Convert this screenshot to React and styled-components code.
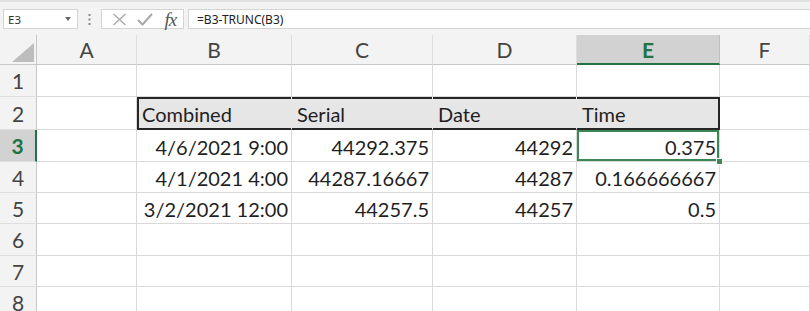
import React from "react";
import styled, { createGlobalStyle } from "styled-components";

const GlobalStyle = createGlobalStyle`
  html, body {
    margin: 0;
    padding: 0;
    background: #ffffff;
    overflow: hidden;
  }
  body {
    font-family: Lato, "Liberation Sans", sans-serif;
  }
`;

const GREEN = "#217346";
const GRID = "#d9d9d9";

const Page = styled.div`
  width: 810px;
  height: 311px;
  overflow: hidden;
  background: #f3f3f3;
`;

const FormulaBar = styled.div`
  display: flex;
  align-items: center;
  height: 35px;
  box-sizing: border-box;
  padding: 1px 0 0 3px;
  border-top: 2px solid #e1e1e1;
`;

const NameBox = styled.div`
  display: flex;
  align-items: center;
  justify-content: space-between;
  width: 75px;
  height: 20px;
  box-sizing: border-box;
  padding: 0 6px 0 4px;
  background: #fff;
  border: 1px solid #d4d4d4;
  font-family: "Noto Sans", "Liberation Sans", sans-serif;
  font-size: 11.5px;
  color: #333;
`;

const Caret = styled.span`
  width: 0;
  height: 0;
  border-left: 3px solid transparent;
  border-right: 3px solid transparent;
  border-top: 4px solid #666;
`;

const Grip = styled.div`
  display: flex;
  justify-content: center;
  width: 23px;
`;

const IconBox = styled.div`
  display: flex;
  align-items: center;
  width: 83px;
  height: 20px;
  box-sizing: border-box;
  margin-right: 4px;
  padding-left: 5px;
  background: #fff;
  border: 1px solid #d4d4d4;
`;

const IconSlot = styled.span`
  display: flex;
  align-items: center;
  justify-content: center;
  width: 27px;
`;

const Fx = styled.span`
  font-family: "Liberation Serif", serif;
  font-style: italic;
  font-size: 19px;
  color: #555;
  letter-spacing: -1px;
  line-height: 1;
`;

const FormulaInput = styled.div`
  flex: 1;
  display: flex;
  align-items: center;
  height: 20px;
  box-sizing: border-box;
  padding-left: 8px;
  background: #fff;
  border: 1px solid #d4d4d4;
  border-right: none;
  font-family: "Noto Sans", "Liberation Sans", sans-serif;
  font-size: 12px;
  color: #222;
`;

const Sheet = styled.div`
  display: grid;
  grid-template-columns: 37px 100px 155px 141px 144px 143px 1fr;
  grid-template-rows: 30px 32px 33px 32px 31px 31px 32px 31px 32px;
  font-family: Lato, "Liberation Sans", sans-serif;
  font-size: 20px;
`;

const Corner = styled.div`
  position: relative;
  background: #f3f3f3;
  border-right: 1px solid #c8c8c8;
  border-bottom: 1px solid #c8c8c8;
  &::after {
    content: "";
    position: absolute;
    left: 12px;
    right: 2px;
    top: 8px;
    bottom: 2px;
    background: #bdbdbd;
    clip-path: polygon(100% 0, 100% 100%, 0 100%);
  }
`;

const ColHead = styled.div`
  display: flex;
  align-items: center;
  justify-content: center;
  box-sizing: border-box;
  font-size: 21px;
  background: ${(p) => (p.$active ? "#d2d2d2" : "#f3f3f3")};
  border-right: 1px solid ${(p) => (p.$active ? "#c0c0c0" : "#dedede")};
  border-bottom: ${(p) => (p.$active ? `2px solid ${GREEN}` : "1px solid #c8c8c8")};
  color: ${(p) => (p.$active ? GREEN : "#444")};
  font-weight: ${(p) => (p.$active ? 700 : 400)};
  padding-top: ${(p) => (p.$active ? "1px" : "0")};
`;

const RowHead = styled.div`
  display: flex;
  align-items: center;
  justify-content: center;
  box-sizing: border-box;
  font-size: 21px;
  background: ${(p) => (p.$active ? "#d2d2d2" : "#f3f3f3")};
  border-right: ${(p) => (p.$active ? `2px solid ${GREEN}` : "1px solid #c8c8c8")};
  border-bottom: 1px solid #dedede;
  color: ${(p) => (p.$active ? GREEN : "#444")};
  font-weight: ${(p) => (p.$active ? 700 : 400)};
`;

const frameShadow = (p) => {
  if (p.$selected) return `inset 0 0 0 2px #3b8756`;
  if (!p.$head) return "none";
  const parts = ["inset 0 2px 0 #262626", "inset 0 -1px 0 #262626"];
  if (p.$first) parts.push("inset 2px 0 0 #262626");
  if (p.$last) parts.push("inset -1px 0 0 #262626");
  return parts.join(", ");
};

const Cell = styled.div`
  position: relative;
  display: flex;
  align-items: center;
  justify-content: ${(p) => (p.$right ? "flex-end" : "flex-start")};
  box-sizing: border-box;
  padding: 2px 3px 0 5px;
  background: ${(p) => (p.$head ? "#e7e6e6" : "#fff")};
  border-right: 1px solid
    ${(p) => (p.$head ? (p.$last ? "#262626" : "#e7e6e6") : GRID)};
  border-bottom: 1px solid ${(p) => (p.$head ? "#262626" : GRID)};
  box-shadow: ${frameShadow};
  color: #1f1f1f;
  white-space: nowrap;

  &::after {
    content: "";
    display: ${(p) => (p.$selected ? "block" : "none")};
    position: absolute;
    right: -4px;
    bottom: -4px;
    width: 5px;
    height: 5px;
    background: #3b8756;
    border: 1px solid #fff;
    z-index: 2;
  }
`;

const columns = ["A", "B", "C", "D", "E", "F"];

const rows = [
  { n: 1, cells: [] },
  {
    n: 2,
    head: true,
    cells: [null, "Combined", "Serial", "Date", "Time"],
  },
  { n: 3, cells: [null, "4/6/2021 9:00", "44292.375", "44292", "0.375"] },
  { n: 4, cells: [null, "4/1/2021 4:00", "44287.16667", "44287", "0.166666667"] },
  { n: 5, cells: [null, "3/2/2021 12:00", "44257.5", "44257", "0.5"] },
  { n: 6, cells: [] },
  { n: 7, cells: [] },
  { n: 8, cells: [] },
];

const CrossIcon = () => (
  <svg width="15" height="13" viewBox="0 0 15 13">
    <path d="M1.5 1 L13.5 12 M13.5 1 L1.5 12" stroke="#a8a8a8" strokeWidth="1.4" fill="none" />
  </svg>
);

const CheckIcon = () => (
  <svg width="16" height="13" viewBox="0 0 16 13">
    <path d="M1 7 L5.5 11.5 L15 1" stroke="#a8a8a8" strokeWidth="2" fill="none" />
  </svg>
);

const GripIcon = () => (
  <svg width="3" height="11" viewBox="0 0 3 11">
    <rect x="0.5" y="0" width="2" height="2" fill="#8a8a8a" />
    <rect x="0.5" y="4.5" width="2" height="2" fill="#8a8a8a" />
    <rect x="0.5" y="9" width="2" height="2" fill="#8a8a8a" />
  </svg>
);

export default function App() {
  return (
    <Page>
      <GlobalStyle />
      <FormulaBar>
        <NameBox>
          E3
          <Caret />
        </NameBox>
        <Grip>
          <GripIcon />
        </Grip>
        <IconBox>
          <IconSlot>
            <CrossIcon />
          </IconSlot>
          <IconSlot>
            <CheckIcon />
          </IconSlot>
          <IconSlot>
            <Fx>fx</Fx>
          </IconSlot>
        </IconBox>
        <FormulaInput>=B3-TRUNC(B3)</FormulaInput>
      </FormulaBar>

      <Sheet>
        <Corner />
        {columns.map((c) => (
          <ColHead key={c} $active={c === "E"}>
            {c}
          </ColHead>
        ))}
        {rows.map((row) => (
          <React.Fragment key={row.n}>
            <RowHead $active={row.n === 3}>{row.n}</RowHead>
            {columns.map((c, i) => {
              const value = row.cells[i];
              const inTable = row.head && i >= 1 && i <= 4;
              return (
                <Cell
                  key={c}
                  $head={inTable}
                  $first={inTable && i === 1}
                  $last={inTable && i === 4}
                  $right={!row.head}
                  $selected={row.n === 3 && c === "E"}
                >
                  {value}
                </Cell>
              );
            })}
          </React.Fragment>
        ))}
      </Sheet>
    </Page>
  );
}
